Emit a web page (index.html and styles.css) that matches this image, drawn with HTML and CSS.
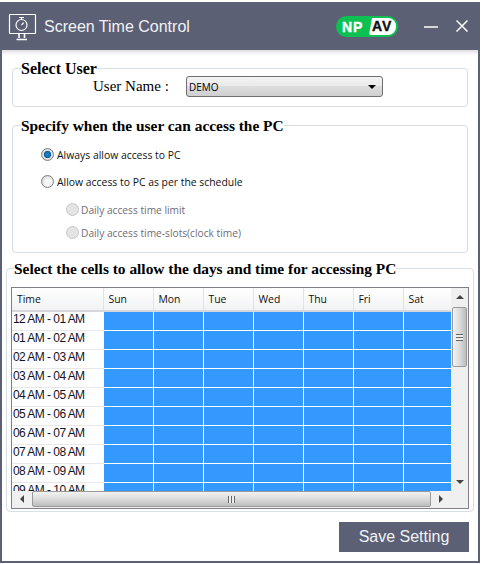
FILE: index.html
```html
<!DOCTYPE html>
<html lang="en">
<head>
    <meta charset="UTF-8">
    <title>Screen Time Control</title>
    <link rel="stylesheet" href="styles.css">
</head>
<body>
    <div class="window">
        <header class="titlebar">
            <svg class="app-icon" width="29" height="29" viewBox="0 0 29 29" fill="none" stroke="#fff" stroke-width="1.2">
                <rect x="1.500" y="1.500" width="26" height="19" rx="0.500"/>
                <path d="M11 21v4M16.500 21v4M8.500 26.500h10.500" stroke-width="1.600"/>
                <circle cx="13.500" cy="12" r="5.500"/>
                <path d="M13.500 12l2.200-2.400M11 4.500h5M13.500 4.500v2"/>
            </svg>
            <h1 class="app-title">Screen Time Control</h1>
            <div class="logo"><span class="logo-np">NP</span><span class="logo-av">AV</span></div>
            <svg class="win-btn min" width="14" height="14" viewBox="0 0 14 14" stroke="#fff" stroke-width="1.5"><path d="M0 8h14"/></svg>
            <svg class="win-btn" width="12" height="12" viewBox="0 0 12 12" stroke="#fff" stroke-width="1.5"><path d="M0.500 0.500l11 11M11.500 0.500l-11 11"/></svg>
        </header>

        <main class="content">
            <fieldset class="box user-box">
                <legend>Select User</legend>
                <div class="user-row">
                    <label class="user-label">User Name :</label>
                    <div class="combo">DEMO<span class="combo-arrow"></span></div>
                </div>
            </fieldset>

            <fieldset class="box access-box">
                <legend>Specify when the user can access the PC</legend>
                <div class="option"><span class="radio checked"></span>Always allow access to PC</div>
                <div class="option"><span class="radio"></span>Allow access to PC as per the schedule</div>
                <div class="option sub"><span class="radio"></span>Daily access time limit</div>
                <div class="option sub"><span class="radio"></span>Daily access time-slots(clock time)</div>
            </fieldset>

            <fieldset class="box cells-box">
                <legend>Select the cells to allow the days and time for accessing PC</legend>
                <div class="grid">
                    <div class="grid-top">
                        <div class="grid-view">
                            <table class="schedule">
                                <thead>
                                    <tr><th class="time-col">Time</th><th>Sun</th><th>Mon</th><th>Tue</th><th>Wed</th><th>Thu</th><th>Fri</th><th>Sat</th></tr>
                                </thead>
                                <tbody>
                                    <tr><td class="time-cell">12 AM - 01 AM</td><td></td><td></td><td></td><td></td><td></td><td></td><td></td></tr>
                                    <tr><td class="time-cell">01 AM - 02 AM</td><td></td><td></td><td></td><td></td><td></td><td></td><td></td></tr>
                                    <tr><td class="time-cell">02 AM - 03 AM</td><td></td><td></td><td></td><td></td><td></td><td></td><td></td></tr>
                                    <tr><td class="time-cell">03 AM - 04 AM</td><td></td><td></td><td></td><td></td><td></td><td></td><td></td></tr>
                                    <tr><td class="time-cell">04 AM - 05 AM</td><td></td><td></td><td></td><td></td><td></td><td></td><td></td></tr>
                                    <tr><td class="time-cell">05 AM - 06 AM</td><td></td><td></td><td></td><td></td><td></td><td></td><td></td></tr>
                                    <tr><td class="time-cell">06 AM - 07 AM</td><td></td><td></td><td></td><td></td><td></td><td></td><td></td></tr>
                                    <tr><td class="time-cell">07 AM - 08 AM</td><td></td><td></td><td></td><td></td><td></td><td></td><td></td></tr>
                                    <tr><td class="time-cell">08 AM - 09 AM</td><td></td><td></td><td></td><td></td><td></td><td></td><td></td></tr>
                                    <tr><td class="time-cell">09 AM - 10 AM</td><td></td><td></td><td></td><td></td><td></td><td></td><td></td></tr>
                                </tbody>
                            </table>
                        </div>
                        <div class="vscroll">
                            <div class="scroll-btn"><span class="tri tri-up"></span></div>
                            <div class="vthumb"><span class="grip-h"></span></div>
                            <div class="scroll-track"></div>
                            <div class="scroll-btn"><span class="tri tri-down"></span></div>
                        </div>
                    </div>
                    <div class="hscroll">
                        <div class="scroll-btn wide"><span class="tri tri-left"></span></div>
                        <div class="hthumb"><span class="grip-v"></span></div>
                        <div class="scroll-btn wide"><span class="tri tri-right"></span></div>
                        <div class="corner"></div>
                    </div>
                </div>
            </fieldset>

            <div class="actions">
                <button class="save-btn">Save Setting</button>
            </div>
        </main>
    </div>
</body>
</html>
```

FILE: styles.css
```css
* {
    box-sizing: border-box;
    margin: 0;
    padding: 0;
}

body {
    background: #fff;
    font-family: "Liberation Sans", Arial, sans-serif;
    overflow: hidden;
}

.window {
    width: 480px;
    height: 561px;
    margin-top: 2px;
    border: solid #5b6075;
    border-width: 0 2px 2px 2px;
    background: #fff;
    display: flex;
    flex-direction: column;
}

.titlebar {
    height: 48px;
    flex: none;
    margin: 0 -2px;
    padding: 0 12px 0 8px;
    background: #5b6075;
    display: flex;
    align-items: center;
}

.app-icon {
    margin: 2px 7px 0 0;
}

.app-title {
    flex: 1;
    padding-top: 2px;
    font-size: 16px;
    font-weight: normal;
    color: #f1f2f5;
}

.logo {
    width: 62px;
    height: 21px;
    margin: 1px 26px 0 0;
    border-radius: 11px;
    background: #0cc152;
    display: flex;
    align-items: center;
    font-size: 14px;
    font-weight: bold;
    letter-spacing: 1px;
    padding: 2px 2px 2px 6px;
    -webkit-text-stroke: 0.4px currentColor;
}

.logo-np {
    color: #fff;
    width: 27px;
}

.logo-av {
    flex: 1;
    height: 17px;
    line-height: 17px;
    padding-left: 3px;
    color: #111;
    background: #fff;
    border-radius: 2px 8px 8px 2px;
    clip-path: polygon(3px 0, 100% 0, 100% 100%, 0 100%);
}

.win-btn {
    display: block;
}

.win-btn.min {
    margin-right: 18px;
}

.content {
    flex: 1;
    display: flex;
    flex-direction: column;
    box-shadow: inset 0 5px 4px -3px #d8d8dc;
    padding-top: 10px;
}

.box {
    border: 1px solid #d5dfe5;
    border-radius: 4px;
    margin: 0 10px;
}

.box legend {
    font-family: "Liberation Serif", "Times New Roman", serif;
    font-weight: bold;
    font-size: 15.4px;
    color: #000;
    margin-left: 8px;
    line-height: 17px;
}

.user-box {
    height: 47px;
}

.user-box legend {
    font-size: 16px;
}

.user-row {
    display: flex;
    align-items: center;
    padding: 0 0 0 80px;
    margin-top: -1px;
}

.user-label {
    font-family: "Liberation Serif", "Times New Roman", serif;
    font-size: 15px;
    width: 93px;
}

.combo {
    width: 197px;
    height: 21px;
    position: relative;
    border: 1px solid #6f6f6f;
    border-radius: 3px;
    background: linear-gradient(to bottom, #f2f2f2 0%, #ebebeb 45%, #dddddd 50%, #cfcfcf 100%);
    font-family: "Open Sans", sans-serif;
    font-size: 10px;
    line-height: 20px;
    padding-left: 2px;
    color: #000;
}

.combo-arrow {
    position: absolute;
    right: 6px;
    top: 8px;
    border-style: solid;
    border-width: 4px 4px 0 4px;
    border-color: #000 transparent transparent transparent;
}

.access-box {
    height: 136px;
    margin-top: 10px;
    padding-top: 7px;
}

.option {
    display: flex;
    align-items: center;
    height: 27px;
    margin-left: 28px;
    font-family: "Open Sans", sans-serif;
    font-size: 10.4px;
    color: #111;
}

.option.sub {
    height: 23px;
    margin-left: 53px;
    font-size: 10.2px;
    color: #6d6d78;
}

.option:not(.sub) + .sub {
    margin-top: 3px;
}

.radio {
    width: 13px;
    height: 13px;
    margin-right: 3px;
    border-radius: 50%;
    border: 1px solid #7f8080;
    background: radial-gradient(circle at 60% 60%, #f6f6f6 35%, #c4c4c4 100%);
    flex: none;
}

.radio.checked {
    background: radial-gradient(circle, #1f8fd6 0, #0f5f9c 42%, #e4e4e4 52%, #b8b8b8 100%);
}

.sub .radio {
    margin-right: 2px;
    border-color: #c8c8c8;
    background: #e4e4e4;
}

.cells-box {
    height: 252px;
    margin: 7px 4px 0;
    padding: 10px 4px 0;
}

.cells-box legend {
    margin-left: 3px;
}

.grid {
    width: 458px;
    height: 222px;
    border: 1px solid #808088;
    display: flex;
    flex-direction: column;
    background: #f0f0f0;
}

.grid-top {
    flex: 1;
    min-height: 0;
    display: flex;
}

.grid-view {
    width: 440px;
    overflow: hidden;
}

.schedule {
    border-collapse: collapse;
    table-layout: fixed;
    width: 440px;
    font-size: 12px;
    background: #fff;
}

.schedule th {
    width: 50px;
    height: 23px;
    padding-left: 5px;
    text-align: left;
    font-family: "Open Sans", sans-serif;
    font-weight: normal;
    font-size: 10.4px;
    color: #111;
    background: linear-gradient(to bottom, #ffffff, #f1f2f4);
    border-right: 1px solid #e3e3e3;
    border-bottom: 2px solid #d8d8dc;
}

.schedule th.time-col {
    width: 91px;
}

.schedule td {
    height: 19px;
    background: #3399ff;
    border: 1px solid #fff;
    border-top: none;
    border-left: none;
}

.schedule td.time-cell {
    background: #fff;
    color: #12121f;
    border-bottom: 1px solid #e8e8e8;
    white-space: nowrap;
    padding: 0 0 3px 1px;
    letter-spacing: -0.55px;
}

.vscroll {
    width: 17px;
    flex: none;
    display: flex;
    flex-direction: column;
    background: #f0f0f0;
}

.scroll-btn {
    width: 17px;
    height: 18px;
    flex: none;
    display: flex;
    align-items: center;
    justify-content: center;
}

.scroll-btn.wide {
    width: 20px;
    height: 16px;
}

.scroll-track {
    flex: 1;
}

.vthumb {
    width: 15px;
    height: 60px;
    margin: 1px 0 0 1px;
    border: 1px solid #9a9a9a;
    border-radius: 2px;
    background: linear-gradient(to right, #f2f2f2, #dcdcdc 50%, #bdbdbd);
    display: flex;
    align-items: center;
    justify-content: center;
}

.hthumb {
    flex: 1;
    height: 16px;
    border: 1px solid #9a9a9a;
    border-radius: 2px;
    background: linear-gradient(to bottom, #f2f2f2, #dcdcdc 50%, #bdbdbd);
    display: flex;
    align-items: center;
    justify-content: center;
}

.grip-h {
    width: 7px;
    height: 7px;
    background: repeating-linear-gradient(to bottom, #666 0, #666 1px, #eee 1px, #eee 3px);
}

.grip-v {
    width: 7px;
    height: 7px;
    background: repeating-linear-gradient(to right, #666 0, #666 1px, #eee 1px, #eee 3px);
}

.tri {
    display: block;
    border-style: solid;
    border-color: transparent;
}

.tri-up {
    border-width: 0 4px 4px 4px;
    border-bottom-color: #444;
}

.tri-down {
    border-width: 4px 4px 0 4px;
    border-top-color: #444;
}

.tri-left {
    border-width: 4px 4px 4px 0;
    border-right-color: #444;
}

.tri-right {
    border-width: 4px 0 4px 4px;
    border-left-color: #444;
}

.hscroll {
    height: 17px;
    flex: none;
    display: flex;
    align-items: flex-start;
    background: #f0f0f0;
}

.corner {
    width: 17px;
    flex: none;
}

.actions {
    display: flex;
    justify-content: flex-end;
    padding: 10px 9px 0 0;
}

.save-btn {
    width: 130px;
    height: 30px;
    border: none;
    background: #5b6075;
    color: #f1f2f5;
    font-family: "Liberation Sans", Arial, sans-serif;
    font-size: 16px;
}
```
